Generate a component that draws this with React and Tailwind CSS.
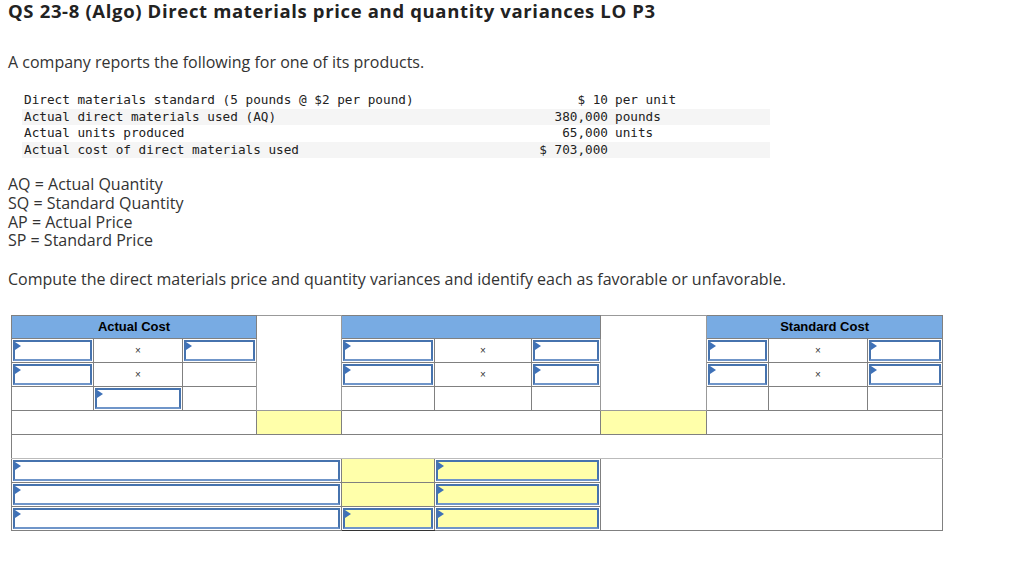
import React from "react";

const Tri = () => (
  <span className="absolute left-0 top-0 w-0 h-0 border-y-[4px] border-y-transparent border-l-[6px] border-l-[#3e71b8]" />
);

const Input = ({ yellow }) => (
  <div
    className={`relative h-[21px] m-[1px] border-2 border-[#4673ae] border-b-[#6f95c9] ${
      yellow ? "bg-[#ffffaa]" : "bg-white"
    }`}
  >
    <Tri />
  </div>
);

const td = "border border-[#808080] p-0 h-[24px] align-middle";
const X = () => <td className={`${td} text-center text-[10px] text-[#333]`}>×</td>;
const I = ({ yellow }) => (
  <td className={td}>
    <Input yellow={yellow} />
  </td>
);
const E = ({ cls = "", ...p }) => <td className={`${td} ${cls}`} {...p} />;

const dataRows = [
  ["Direct materials standard (5 pounds @ $2 per pound)", "$ 10", "per unit", false],
  ["Actual direct materials used (AQ)", "380,000", "pounds", true],
  ["Actual units produced", "65,000", "units", false],
  ["Actual cost of direct materials used", "$ 703,000", "", true],
];

export default function App() {
  return (
    <div className="w-[1024px] h-[579px] bg-white overflow-hidden text-[#333]" style={{ fontFamily: "'Open Sans', Lato, sans-serif" }}>
      <h1 className="pl-[8px] pt-[1px] text-[18.5px] leading-[20px] font-bold text-[#222] tracking-[0.65px] whitespace-nowrap">
        QS 23-8 (Algo) Direct materials price and quantity variances LO P3
      </h1>
      <p className="pl-[8px] mt-[30px] text-[16px] leading-[22px]">
        A company reports the following for one of its products.
      </p>
      <div className="ml-[22px] mt-[19px] w-[748px] text-[12.7px] leading-[16.6px] text-[#222]" style={{ fontFamily: "'DejaVu Sans Mono', monospace" }}>
        {dataRows.map(([a, b, c, shade], i) => (
          <div key={i} className={`flex ${shade ? "bg-[#f5f5f5]" : ""}`}>
            <div className="pl-[2px] w-[480px] whitespace-pre">{a}</div>
            <div className="w-[106px] text-right whitespace-pre">{b}</div>
            <div className="pl-[7px] whitespace-pre">{c}</div>
          </div>
        ))}
      </div>
      <div className="pl-[8px] mt-[17px] text-[16px] leading-[18.7px]">
        <div>AQ = Actual Quantity</div>
        <div>SQ = Standard Quantity</div>
        <div>AP = Actual Price</div>
        <div>SP = Standard Price</div>
      </div>
      <p className="pl-[8px] mt-[19px] text-[16px] leading-[20px]">
        Compute the direct materials price and quantity variances and identify each as favorable or unfavorable.
      </p>
      <div className="ml-[11px] mt-[26px]">
        <table className="border-collapse table-fixed w-[932px]" style={{ fontFamily: "'Liberation Sans', Arial, sans-serif" }}>
          <colgroup>
            {[82, 89, 74, 85, 93, 97, 69, 106, 62, 99, 75].map((w, i) => (
              <col key={i} style={{ width: w }} />
            ))}
          </colgroup>
          <tbody>
            <tr>
              <td colSpan={3} className="border border-[#808080] h-[23px] bg-[#78abe3] text-center text-[13px] font-bold text-black">Actual Cost</td>
              <td rowSpan={4} className="border border-[#999] bg-white" />
              <td colSpan={3} className="border border-[#808080] h-[23px] bg-[#78abe3]" />
              <td rowSpan={4} className="border border-[#999] bg-white" />
              <td colSpan={3} className="border border-[#808080] h-[23px] bg-[#78abe3] text-center text-[13px] font-bold text-black">Standard Cost</td>
            </tr>
            <tr>
              <I /><X /><I />
              <I /><X /><I />
              <I /><X /><I />
            </tr>
            <tr>
              <I /><X /><E />
              <I /><X /><I />
              <I /><X /><I />
            </tr>
            <tr>
              <E /><I /><E />
              <E /><E /><E />
              <E /><E /><E />
            </tr>
            <tr>
              <E colSpan={3} />
              <E cls="bg-[#ffffaa] h-[23px]" />
              <E colSpan={3} />
              <E cls="bg-[#ffffaa]" />
              <E colSpan={3} />
            </tr>
            <tr>
              <E colSpan={11} cls="border-b-[#bbb]" />
            </tr>
            <tr>
              <td colSpan={4} className={td}><Input /></td>
              <E cls="bg-[#ffffaa]" />
              <td colSpan={2} className={td}><Input yellow /></td>
              <td colSpan={4} rowSpan={3} className="border border-[#808080] bg-white" />
            </tr>
            <tr>
              <td colSpan={4} className={td}><Input /></td>
              <E cls="bg-[#ffffaa]" />
              <td colSpan={2} className={td}><Input yellow /></td>
            </tr>
            <tr>
              <td colSpan={4} className={td}><Input /></td>
              <td className={`${td} border-t-black border-b-[#333]`}><Input yellow /></td>
              <td colSpan={2} className={td}><Input yellow /></td>
            </tr>
          </tbody>
        </table>
      </div>
    </div>
  );
}
